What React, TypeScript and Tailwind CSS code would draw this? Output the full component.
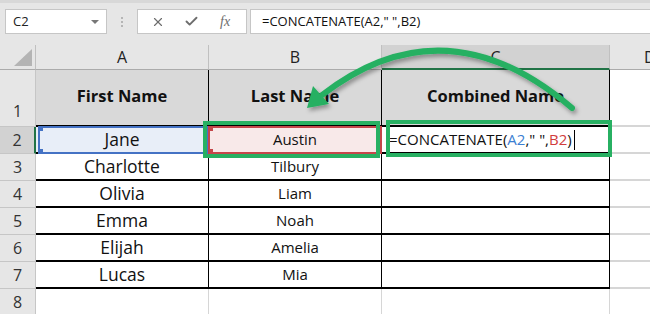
import { Check, X } from "lucide-react";

const people = [
  ["Jane", "Austin"],
  ["Charlotte", "Tilbury"],
  ["Olivia", "Liam"],
  ["Emma", "Noah"],
  ["Elijah", "Amelia"],
  ["Lucas", "Mia"],
];

function Toolbar() {
  return (
    <div className="h-[45px] bg-[#e6e6e6] border-t-[3px] border-[#d8d8d8] pt-[6px] pl-[5px] flex items-start">
      <div className="w-[102px] h-[25px] bg-white border border-[#c6c6c6] flex items-center justify-between pl-[7px] pr-[7px] text-[13px] text-[#222]">
        <span>C2</span>
        <span className="w-0 h-0 border-l-[4px] border-r-[4px] border-t-[4px] border-l-transparent border-r-transparent border-t-[#777]" />
      </div>
      <div className="w-[30px] h-[25px] flex flex-col items-center justify-center gap-[2px]">
        <span className="w-[2px] h-[2px] bg-[#b5b5b5]" />
        <span className="w-[2px] h-[2px] bg-[#b5b5b5]" />
        <span className="w-[2px] h-[2px] bg-[#b5b5b5]" />
      </div>
      <div className="w-[110px] h-[25px] bg-white border border-[#c6c6c6] flex items-center text-[#6d6d6d]">
        <X className="ml-[13px] w-[14px] h-[14px]" strokeWidth={2} />
        <Check className="ml-[19px] w-[15px] h-[15px]" strokeWidth={3} />
        <span className="ml-[21px] font-['Liberation_Serif',serif] italic text-[14px]">fx</span>
      </div>
      <div className="ml-[3px] flex-1 h-[25px] bg-white border border-r-0 border-[#c6c6c6] flex items-center pl-[11px] text-[13px] text-[#111]">
        =CONCATENATE(A2," ",B2)
      </div>
    </div>
  );
}

function Handles({ color }: { color: string }) {
  return (
    <>
      <span className={`absolute -left-[1px] -top-[1px] w-[4px] h-[4px] ${color}`} />
      <span className={`absolute -left-[1px] -bottom-[1px] w-[4px] h-[4px] ${color}`} />
      <span className={`absolute -right-[1px] -top-[1px] w-[4px] h-[4px] ${color}`} />
      <span className={`absolute -right-[1px] -bottom-[1px] w-[4px] h-[4px] ${color}`} />
    </>
  );
}

function Arrow() {
  return (
    <svg className="absolute inset-0 pointer-events-none z-20" width="650" height="314" viewBox="0 0 650 314">
      <defs>
        <filter id="shadow" x="-20%" y="-20%" width="140%" height="140%">
          <feDropShadow dx="2" dy="3" stdDeviation="2" floodColor="#000" floodOpacity="0.35" />
        </filter>
      </defs>
      <g filter="url(#shadow)">
        <path d="M572 108 Q445 0 322 95" fill="none" stroke="#27b062" strokeWidth="6" strokeLinecap="round" />
        <polygon points="307,108 313,86 329,104" fill="#27b062" />
      </g>
    </svg>
  );
}

export default function App() {
  const rowHead = "bg-[#e6e6e6] border-r border-b border-[#c6c6c6] flex items-center justify-center text-[16px] text-[#333]";
  const cellA = "border-r border-b-2 border-black flex items-center justify-center text-[17.5px] text-[#111]";
  const cellB = "border-r border-b-2 border-black flex items-center justify-center text-[15px] text-[#111]";
  const cellC = "border-r border-b-2 border-black";
  const cellD = "border-b-2 border-[#d6d6d6]";
  const colHead = "bg-[#e6e6e6] border-r border-b border-[#c0c0c0] border-b-[#ababab] flex items-center justify-center text-[16px] text-[#222]";
  const titleCell = "bg-[#d9d9d9] border-r border-b-2 border-black flex items-center justify-center pb-[3px] text-[16.5px] font-bold text-[#111]";

  return (
    <div className="relative w-[650px] h-[314px] overflow-hidden bg-white font-['Open_Sans',sans-serif]">
      <Toolbar />
      <div className="grid grid-cols-[36px_173px_173px_228px_1fr] grid-rows-[25px_57px_repeat(6,27px)_1fr] h-[269px]">
        {/* column headers */}
        <div className="bg-[#e6e6e6] border-r border-b border-[#ababab] border-r-[#c0c0c0] flex items-end justify-end pr-[3px] pb-[3px]">
          <svg width="18" height="17" viewBox="0 0 18 17">
            <polygon points="18,0 18,17 0,17" fill="#b4b4b4" />
          </svg>
        </div>
        <div className={colHead}>A</div>
        <div className={colHead}>B</div>
        <div className="bg-[#d2d2d2] border-r border-b-2 border-[#c0c0c0] border-b-[#217346] flex items-center justify-center text-[16px] text-[#222]">C</div>
        <div className="bg-[#e6e6e6] border-b border-[#ababab] flex items-center pl-[34px] text-[16px] text-[#222]">D</div>

        {/* row 1 */}
        <div className={`${rowHead} !items-end pb-[3px]`}>1</div>
        <div className={titleCell}>First Name</div>
        <div className={titleCell}>Last Name</div>
        <div className={titleCell}>Combined Name</div>
        <div className={cellD} />

        {people.map(([first, last], i) => {
          const active = i === 0;
          return [
            <div
              key={`h${i}`}
              className={active ? "bg-[#d2d2d2] border-r-2 border-r-[#217346] border-b border-b-[#c6c6c6] flex items-center justify-center text-[16px] text-[#333]" : rowHead}
            >
              {i + 2}
            </div>,
            <div key={`a${i}`} className={`${cellA} relative ${active ? "bg-[#e8eef8]" : ""}`}>
              {active && (
                <span className="absolute left-[2px] -top-[1px] right-0 -bottom-[2px] border-2 border-[#4472c4]">
                  <Handles color="bg-[#4472c4]" />
                </span>
              )}
              <span className="relative">{first}</span>
            </div>,
            <div key={`b${i}`} className={`${cellB} relative ${active ? "bg-[#f8e9e9]" : ""}`}>
              {active && (
                <>
                  <span className="absolute -left-[1px] -top-[1px] -right-[1px] -bottom-[2px] border-2 border-[#c5464a]">
                    <Handles color="bg-[#c5464a]" />
                  </span>
                  <span className="absolute -left-[6px] -top-[6px] w-[177px] h-[37px] border-4 border-[#27b062] z-10" />
                </>
              )}
              <span className="relative">{last}</span>
            </div>,
            <div key={`c${i}`} className={`${cellC} relative ${active ? "flex items-center pl-[7px] text-[15px] text-[#111]" : ""}`}>
              {active && (
                <>
                  <span>=CONCATENATE(</span>
                  <span className="text-[#3c7fd2]">A2</span>
                  <span>," ",</span>
                  <span className="text-[#d13c3c]">B2</span>
                  <span>)</span>
                  <span className="ml-[2px] w-px h-[20px] bg-black" />
                  <span className="absolute left-[4px] -top-[7px] w-[226px] h-[37px] border-4 border-[#27b062] z-10" />
                </>
              )}
            </div>,
            <div key={`d${i}`} className={cellD} />,
          ];
        })}

        {/* row 8 */}
        <div className={`${rowHead} border-b-0`}>8</div>
        <div className="border-r border-[#d6d6d6]" />
        <div className="border-r border-[#d6d6d6]" />
        <div className="border-r border-[#d6d6d6]" />
        <div />
      </div>
      <Arrow />
    </div>
  );
}
